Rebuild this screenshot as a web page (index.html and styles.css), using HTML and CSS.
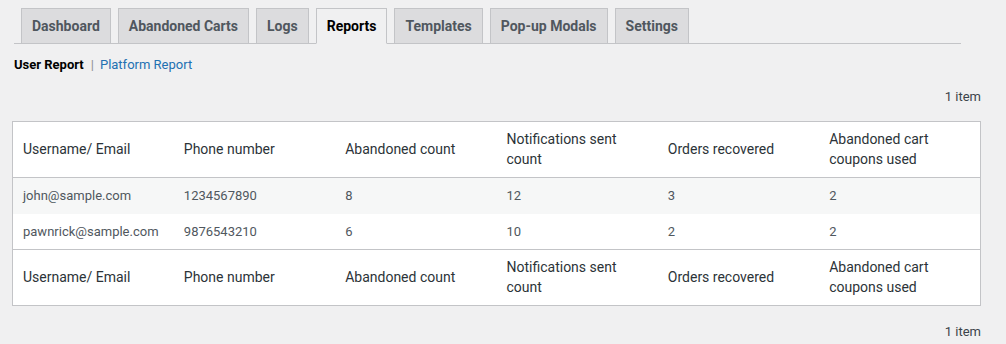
FILE: index.html
```html
<!DOCTYPE html>
<html>
<head>
    <title>Reports</title>
    <link rel="stylesheet" href="styles.css">
</head>
<body>
    <div class="wrap">
        <nav class="nav-tab-wrapper">
            <a class="nav-tab" href="#">Dashboard</a>
            <a class="nav-tab" href="#">Abandoned Carts</a>
            <a class="nav-tab" href="#">Logs</a>
            <a class="nav-tab nav-tab-active" href="#">Reports</a>
            <a class="nav-tab" href="#">Templates</a>
            <a class="nav-tab" href="#">Pop-up Modals</a>
            <a class="nav-tab" href="#">Settings</a>
        </nav>

        <ul class="subsubsub">
            <li><a class="current" href="#">User Report</a><span class="sep">|</span></li>
            <li><a href="#">Platform Report</a></li>
        </ul>

        <div class="tablenav top">
            <span class="displaying-num">1 item</span>
        </div>

        <table class="report-table">
            <thead>
                <tr>
                    <th>Username/ Email</th>
                    <th>Phone number</th>
                    <th>Abandoned count</th>
                    <th>Notifications sent count</th>
                    <th>Orders recovered</th>
                    <th>Abandoned cart coupons used</th>
                </tr>
            </thead>
            <tbody>
                <tr class="alternate">
                    <td>john@sample.com</td>
                    <td>1234567890</td>
                    <td>8</td>
                    <td>12</td>
                    <td>3</td>
                    <td>2</td>
                </tr>
                <tr>
                    <td>pawnrick@sample.com</td>
                    <td>9876543210</td>
                    <td>6</td>
                    <td>10</td>
                    <td>2</td>
                    <td>2</td>
                </tr>
            </tbody>
            <tfoot>
                <tr>
                    <th>Username/ Email</th>
                    <th>Phone number</th>
                    <th>Abandoned count</th>
                    <th>Notifications sent count</th>
                    <th>Orders recovered</th>
                    <th>Abandoned cart coupons used</th>
                </tr>
            </tfoot>
        </table>

        <div class="tablenav bottom">
            <span class="displaying-num">1 item</span>
        </div>
    </div>
</body>
</html>
```

FILE: styles.css
```css
body {
    margin: 0;
    background: #f0f0f1;
    font-family: Roboto, 'Liberation Sans', sans-serif;
    font-size: 13px;
    color: #3c434a;
}
.wrap {
    padding: 8px 25px 0 12px;
}
.nav-tab-wrapper {
    display: flex;
    margin: 0 20px 0 2px;
    border-bottom: 1px solid #c3c4c7;
}
.nav-tab {
    margin-left: 7px;
    margin-bottom: -1px;
    padding: 5px 10px;
    font-size: 14px;
    line-height: 24px;
    font-weight: 700;
    color: #50575e;
    text-decoration: none;
    background: #dcdcde;
    border: 1px solid #c3c4c7;
}
.nav-tab-active {
    color: #000;
    background: #f0f0f1;
    border-bottom-color: #f0f0f1;
}
.subsubsub {
    display: flex;
    list-style: none;
    margin: 11px 0 0 2px;
    padding: 0;
    line-height: 20px;
    color: #646970;
}
.subsubsub a {
    color: #2271b1;
    text-decoration: none;
}
.subsubsub a.current {
    color: #000;
    font-weight: 700;
}
.subsubsub .sep {
    margin: 0 6px 0 7px;
    color: #8c8f94;
}
.tablenav {
    display: flex;
    justify-content: flex-end;
    line-height: 20px;
    color: #3c434a;
}
.tablenav.top {
    margin-top: 12px;
}
.tablenav.bottom {
    margin-top: 16px;
}
.report-table {
    width: 100%;
    margin-top: 14px;
    border-collapse: collapse;
    table-layout: fixed;
    background: #fff;
    border: 1px solid #c3c4c7;
}
.report-table th {
    padding: 8px 10px;
    font-size: 14px;
    font-weight: 400;
    line-height: 1.4em;
    text-align: left;
    color: #2c3338;
}
.report-table thead th {
    border-bottom: 1px solid #c3c4c7;
}
.report-table tfoot th {
    border-top: 1px solid #c3c4c7;
}
.report-table td {
    padding: 8px 10px;
    line-height: 1.5em;
    color: #50575e;
}
.report-table tr.alternate td {
    background: #f6f7f7;
}
```
